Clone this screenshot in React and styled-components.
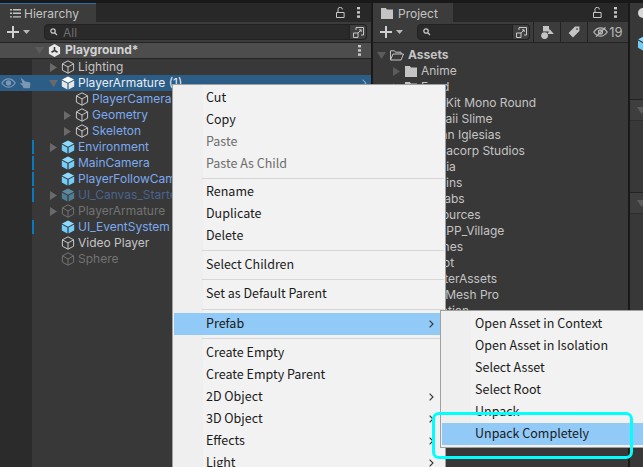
import React from 'react';
import styled, { createGlobalStyle } from 'styled-components';

const Global = createGlobalStyle`
  html, body {
    margin: 0;
    background: #191919;
  }
`;

const Screen = styled.div`
  position: relative;
  width: 643px;
  height: 467px;
  overflow: hidden;
  display: flex;
  gap: 2px;
  padding-top: 3px;
  box-sizing: border-box;
  background: #191919;
  font-family: Inter, 'Noto Sans', sans-serif;
  font-size: 12px;
  color: #c4c4c4;
`;

const Panel = styled.div`
  width: ${(p) => p.$w}px;
  flex: none;
  display: flex;
  flex-direction: column;
  background: #383838;
`;

const TabBar = styled.div`
  height: 19px;
  flex: none;
  display: flex;
  align-items: stretch;
  justify-content: space-between;
  background: #282828;
`;

const Tab = styled.div`
  display: flex;
  align-items: center;
  gap: ${(p) => p.$gap}px;
  width: ${(p) => p.$w}px;
  padding-left: ${(p) => p.$pad}px;
  box-sizing: border-box;
  background: #3c3c3c;
  border-top: ${(p) => (p.$active ? '1px solid #2c6da3' : '1px solid #3c3c3c')};
`;

const TabTools = styled.div`
  display: flex;
  align-items: center;
  gap: 12px;
  padding-right: 11px;
`;

const Toolbar = styled.div`
  height: 21px;
  flex: none;
  display: flex;
  align-items: center;
  box-sizing: border-box;
  padding-left: 7px;
  background: #3c3c3c;
  border-bottom: 1px solid #232323;
`;

const AddButton = styled.div`
  display: flex;
  align-items: center;
  gap: 4px;
  width: ${(p) => p.$w}px;
  flex: none;
`;

const SearchField = styled.div`
  flex: 1;
  height: 16px;
  display: flex;
  align-items: center;
  gap: 3px;
  box-sizing: border-box;
  padding-left: 5px;
  background: #2a2a2a;
  border: 1px solid #212121;
  border-radius: 4px 0 0 4px;
  color: #6f6f6f;
`;

const SearchEnd = styled.div`
  width: 17px;
  height: 16px;
  flex: none;
  display: flex;
  align-items: center;
  justify-content: center;
  box-sizing: border-box;
  background: #3f3f3f;
  border: 1px solid #212121;
  border-left: none;
  border-radius: 0 4px 4px 0;
  margin-right: ${(p) => p.$gap}px;
`;

const FilterButton = styled.div`
  width: ${(p) => p.$w}px;
  height: 20px;
  flex: none;
  display: flex;
  align-items: center;
  justify-content: center;
  gap: 1px;
  border-left: 1px solid #232323;
  color: #b8b8b8;
  font-size: 13px;
`;

const SceneHeader = styled.div`
  height: 16px;
  flex: none;
  display: flex;
  align-items: center;
  justify-content: space-between;
  box-sizing: border-box;
  padding: 0 10px 0 35px;
  background: #4d4d4d;
  border-bottom: 1px solid #242424;
  font-weight: 700;
  color: #d2d2d2;
`;

const SceneName = styled.div`
  display: flex;
  align-items: center;
  gap: 4px;
`;

const Name = styled.span`
  padding-bottom: 2px;
`;

const Tree = styled.div`
  flex: 1;
  background: linear-gradient(to right, #2b2b2b 32px, #383838 32px);
`;

const Row = styled.div`
  height: 16px;
  display: flex;
  align-items: center;
  background: ${(p) => (p.$selected ? '#2c5d87' : 'transparent')};
`;

const Gutter = styled.div`
  width: 32px;
  flex: none;
  display: flex;
  align-items: center;
  gap: 3px;
  padding-left: 1px;
  box-sizing: border-box;
`;

const Cell = styled.div`
  height: 14px;
  display: flex;
  align-items: center;
  box-sizing: border-box;
  border-left: 2px solid ${(p) => (p.$mark ? '#0a78bd' : 'transparent')};
  padding-left: ${(p) => 15 + p.$depth * 14}px;
  color: ${(p) => p.$color};
  white-space: nowrap;
`;

const ArrowSlot = styled.div`
  width: 12px;
  flex: none;
  display: flex;
  align-items: center;
`;

const Label = styled(Name)`
  margin-left: 3px;
`;

const RowEnd = styled.div`
  margin-left: auto;
  padding-right: 4px;
  display: flex;
`;

const AssetList = styled.div`
  flex: 1;
  padding-top: 4px;
`;

const AssetRow = styled.div`
  height: 16px;
  display: flex;
  align-items: center;
  gap: 4px;
  padding-left: ${(p) => 4 + p.$depth * 15}px;
  font-weight: ${(p) => (p.$root ? 700 : 400)};
  white-space: nowrap;
`;

const SidePanel = styled.div`
  flex: 1;
  display: flex;
  flex-direction: column;
  background: #383838;
`;

const SideTop = styled.div`
  height: 97px;
  flex: none;
  padding: 5px 0 0 7px;
  box-sizing: border-box;
  border-bottom: 1px solid #242424;
  display: flex;
  flex-direction: column;
  gap: 17px;
`;

const WhiteDot = styled.div`
  width: 10px;
  height: 10px;
  margin-left: 1px;
  border-radius: 50%;
  background: #d8d8d8;
`;

const SideHeader = styled.div`
  height: 20px;
  flex: none;
  display: flex;
  align-items: center;
  padding-left: 7px;
  background: #3e3e3e;
  border-bottom: 1px solid #2e2e2e;
`;

const SideBody = styled.div`
  height: 72px;
  flex: none;
  box-sizing: border-box;
  border-bottom: 1px solid #242424;
`;

const Menu = styled.div`
  position: absolute;
  left: ${(p) => p.$x}px;
  top: ${(p) => p.$y}px;
  width: ${(p) => p.$w}px;
  box-sizing: border-box;
  padding: 2px 1px;
  background: linear-gradient(to right, #efefef 30px, #f2f2f2 30px);
  border: 1px solid #a0a0a0;
  font-family: 'Noto Sans CJK SC', 'Noto Sans', sans-serif;
  font-size: 12.5px;
`;

const MenuRow = styled.div`
  height: 22px;
  display: flex;
  align-items: center;
  justify-content: space-between;
  padding: 0 10px 0 ${(p) => p.$pad}px;
  background: ${(p) => (p.$hot ? '#91c9f7' : 'transparent')};
  color: ${(p) => (p.$off ? '#6d6d6d' : '#1a1a1a')};
`;

const MenuText = styled.span`
  padding-bottom: 3px;
`;

const MenuSep = styled.div`
  height: 1px;
  margin: ${(p) => (p.$h > 7 ? 4 : 3)}px 0 ${(p) => p.$h - (p.$h > 7 ? 5 : 4)}px 28px;
  background: #d7d7d7;
`;

const Callout = styled.div`
  position: absolute;
  left: 432px;
  top: 412px;
  width: 201px;
  height: 47px;
  box-sizing: border-box;
  border: 3px solid #0ff;
  border-radius: 7px;
`;

const Arrow = ({ open, dim }) => (
  <svg width="9" height="9" viewBox="0 0 9 9">
    <path d={open ? 'M0 1h9L4.5 8z' : 'M1 0l7 4.5L1 9z'} fill={dim ? '#5c5c5c' : '#6a6a6a'} />
  </svg>
);

const Cube = ({ kind, size = 14 }) => {
  if (kind === 'wire' || kind === 'dim') {
    const c = kind === 'dim' ? '#737373' : '#c8c8c8';
    return (
      <svg width={size} height={size} viewBox="0 0 14 14" fill="none" stroke={c}>
        <path d="M7 .8l5.6 3v6.4L7 13.2 1.4 10.2V3.8z" />
        <path d="M1.4 3.8L7 7l5.6-3.2M7 7v6.2" />
      </svg>
    );
  }
  const top = { white: '#fff', blue: '#8ddcff', faded: '#5c8ba1' }[kind];
  const side = { white: '#e6e6e6', blue: '#72cdf9', faded: '#4f7d94' }[kind];
  return (
    <svg width={size} height={size} viewBox="0 0 14 14">
      <path d="M7 .4l6 3.2L7 6.8 1 3.6z" fill={top} />
      <path d="M.8 4.6l5.6 3v6L.8 10.6z" fill={side} />
      <path d="M13.2 4.6l-5.6 3v6l5.6-3z" fill={side} />
    </svg>
  );
};

const UnityMark = () => (
  <svg width="13" height="13" viewBox="0 0 13 13">
    <path d="M6.5 0l5.6 3.2v6.6L6.5 13 .9 9.8V3.2z" fill="#e8e8e8" />
    <path d="M6.5 6.5V3M6.5 6.5l3 1.8M6.5 6.5l-3 1.8" stroke="#3a3a3a" strokeWidth="1.6" />
  </svg>
);

const Dots = () => (
  <svg width="3" height="11" viewBox="0 0 3 11" fill="#c8c8c8">
    <rect y="0" width="3" height="2.4" />
    <rect y="4.2" width="3" height="2.4" />
    <rect y="8.4" width="3" height="2.4" />
  </svg>
);

const Lock = () => (
  <svg width="9" height="11" viewBox="0 0 9 11" fill="none" stroke="#c8c8c8">
    <path d="M.5 5.5h7.6v5H.5zM2 5.5V2.5a2.2 2.2 0 0 1 4.4 0" />
  </svg>
);

const Plus = () => (
  <svg width="12" height="12" viewBox="0 0 12 12" fill="#cfcfcf">
    <path d="M5 0h2v5h5v2H7v5H5V7H0V5h5z" />
  </svg>
);

const Caret = () => (
  <svg width="7" height="4" viewBox="0 0 7 4" fill="#b8b8b8">
    <path d="M0 0h7L3.5 4z" />
  </svg>
);

const Magnifier = () => (
  <svg width="10" height="8" viewBox="0 0 10 8" fill="none" stroke="#c4c4c4" strokeWidth="1.3">
    <circle cx="3" cy="3" r="2.2" />
    <path d="M4.6 4.6L7 7" />
  </svg>
);

const Expand = () => (
  <svg width="11" height="11" viewBox="0 0 11 11" fill="none" stroke="#c8c8c8">
    <path d="M3 3V.5h7.5V8H8" />
    <path d="M.5 6h4.5v4.5H.5zM5 6l3-3M6 2.8h2.2V5" />
  </svg>
);

const Folder = ({ open }) =>
  open ? (
    <svg width="14" height="11" viewBox="0 0 14 11" fill="none" stroke="#c4c4c4">
      <path d="M.5 10V.8h4l1 1.4h5.5V4M.5 10L3 4h10.5L11 10z" />
    </svg>
  ) : (
    <svg width="12" height="11" viewBox="0 0 12 11" fill="#c4c4c4">
      <path d="M0 11V0h4.8L6 1.6h6V11z" />
    </svg>
  );

const ListIcon = () => (
  <svg width="11" height="9" viewBox="0 0 11 9" fill="#c4c4c4">
    <path d="M0 0h2v1.4H0zM3 0h8v1.4H3zM0 3.6h2V5H0zM3 3.6h8V5H3zM0 7.2h2v1.4H0zM3 7.2h8v1.4H3z" />
  </svg>
);

const Eye = ({ off }) => (
  <svg width="15" height="10" viewBox="0 0 15 10" fill="none" stroke={off ? '#b8b8b8' : '#7b98b2'} strokeWidth="1.3">
    <path d="M.8 5C3 1.8 5 .8 7.5.8S12 1.8 14.2 5C12 8.2 10 9.2 7.5 9.2S3 8.2.8 5z" />
    <circle cx="7.5" cy="5" r="2" fill={off ? 'none' : '#7b98b2'} />
    {off && <path d="M3 9.6L12.5.4" />}
  </svg>
);

const Hand = () => (
  <svg width="12" height="12" viewBox="0 0 12 12" fill="#7b98b2">
    <path d="M1.6.6L5 3.2l1 1.2 4.6.8.8 1.4-.6 4.6H4.6L3.4 8.6 1 6.8l.8-.8 1.8.8L3 4.6z" />
  </svg>
);

const Shapes = () => (
  <svg width="13" height="13" viewBox="0 0 13 13" fill="#c4c4c4">
    <rect x="2" y="0" width="6" height="5.4" />
    <circle cx="3.6" cy="9.6" r="3.4" />
    <path d="M8.6 3l4.2 5H6.8z" />
  </svg>
);

const TagIcon = () => (
  <svg width="12" height="12" viewBox="0 0 12 12" fill="#c4c4c4">
    <path fillRule="evenodd" d="M7 .6h4.4V5L5 11.4.6 7zM9 2.2a.8.8 0 1 0 .01 0z" />
  </svg>
);

const Chevron = ({ color = '#333' }) => (
  <svg width="5" height="8" viewBox="0 0 5 8" fill="none" stroke={color} strokeWidth="1.1">
    <path d="M.6.6L4 4 .6 7.4" />
  </svg>
);

const hierarchy = [
  { name: 'Lighting', depth: 0, arrow: 'closed', icon: 'wire', color: '#c4c4c4' },
  { name: 'PlayerArmature (1)', depth: 0, arrow: 'open', icon: 'white', color: '#e8eef4', selected: true },
  { name: 'PlayerCameraRoot', depth: 1, icon: 'wire', color: '#7baaf0' },
  { name: 'Geometry', depth: 1, arrow: 'closed', icon: 'wire', color: '#7baaf0' },
  { name: 'Skeleton', depth: 1, arrow: 'closed', icon: 'wire', color: '#7baaf0' },
  { name: 'Environment', depth: 0, arrow: 'closed', icon: 'blue', color: '#7baaf0', mark: true },
  { name: 'MainCamera', depth: 0, icon: 'blue', color: '#7baaf0', mark: true },
  { name: 'PlayerFollowCamera', depth: 0, icon: 'blue', color: '#7baaf0', mark: true },
  { name: 'UI_Canvas_StarterAssets', depth: 0, arrow: 'closed', icon: 'faded', color: '#48648f', mark: true },
  { name: 'PlayerArmature', depth: 0, arrow: 'closed', icon: 'dim', color: '#727272' },
  { name: 'UI_EventSystem', depth: 0, icon: 'blue', color: '#7baaf0', mark: true },
  { name: 'Video Player', depth: 0, icon: 'wire', color: '#c4c4c4' },
  { name: 'Sphere', depth: 0, icon: 'dim', color: '#727272' },
];

const assets = [
  'Anime', 'Food', 'Fire Kit Mono Round', 'Kawaii Slime', 'Julian Iglesias', 'Megacorp Studios', 'Media',
  'Plugins', 'Prefabs', 'Resources', 'HDRPP_Village', 'Scenes', 'Robot', 'StarterAssets', 'TextMesh Pro', 'UMotion',
];

const mainMenu = [
  ['Cut'], ['Copy'], ['Paste', 'off'], ['Paste As Child', 'off'], 6,
  ['Rename'], ['Duplicate'], ['Delete'], 7,
  ['Select Children'], 7,
  ['Set as Default Parent'], 8,
  ['Prefab', 'hot', 'sub'], 7,
  ['Create Empty'], ['Create Empty Parent'], ['2D Object', '', 'sub'], ['3D Object', '', 'sub'],
  ['Effects', '', 'sub'], ['Light', '', 'sub'],
];

const subMenu = ['Open Asset in Context', 'Open Asset in Isolation', 'Select Asset', 'Select Root', 'Unpack'];

export default function App() {
  return (
    <>
      <Global />
      <Screen>
        <Panel $w={371}>
          <TabBar>
            <Tab $active $w={96} $pad={10} $gap={3}>
              <ListIcon />
              Hierarchy
            </Tab>
            <TabTools>
              <Lock />
              <Dots />
            </TabTools>
          </TabBar>
          <Toolbar>
            <AddButton $w={37}>
              <Plus />
              <Caret />
            </AddButton>
            <SearchField>
              <Magnifier />
              All
            </SearchField>
            <SearchEnd $gap={4}>
              <Expand />
            </SearchEnd>
          </Toolbar>
          <SceneHeader>
            <SceneName>
              <Arrow open dim />
              <UnityMark />
              <Name>Playground*</Name>
            </SceneName>
            <Dots />
          </SceneHeader>
          <Tree>
            {hierarchy.map((item, i) => (
              <Row key={i} $selected={item.selected}>
                <Gutter>
                  {item.selected && <Eye />}
                  {item.selected && <Hand />}
                </Gutter>
                <Cell $depth={item.depth} $mark={item.mark} $color={item.color}>
                  <ArrowSlot>{item.arrow && <Arrow open={item.arrow === 'open'} />}</ArrowSlot>
                  <Cube kind={item.icon} />
                  <Label>{item.name}</Label>
                </Cell>
                {item.selected && (
                  <RowEnd>
                    <Chevron color="#7aa6cc" />
                  </RowEnd>
                )}
              </Row>
            ))}
          </Tree>
        </Panel>

        <Panel $w={255}>
          <TabBar>
            <Tab $w={80} $pad={8} $gap={5}>
              <Folder />
              Project
            </Tab>
            <TabTools>
              <Lock />
              <Dots />
            </TabTools>
          </TabBar>
          <Toolbar>
            <AddButton $w={37}>
              <Plus />
              <Caret />
            </AddButton>
            <SearchField>
              <Magnifier />
            </SearchField>
            <SearchEnd $gap={3}>
              <Expand />
            </SearchEnd>
            <FilterButton $w={26}>
              <Shapes />
            </FilterButton>
            <FilterButton $w={26}>
              <TagIcon />
            </FilterButton>
            <FilterButton $w={40}>
              <Eye off />
              19
            </FilterButton>
          </Toolbar>
          <AssetList>
            <AssetRow $depth={0} $root>
              <Arrow open dim />
              <Folder open />
              <Name>Assets</Name>
            </AssetRow>
            {assets.map((name) => (
              <AssetRow key={name} $depth={1}>
                <Arrow dim />
                <Folder />
                <Name>{name}</Name>
              </AssetRow>
            ))}
          </AssetList>
        </Panel>

        <SidePanel>
          <SideTop>
            <WhiteDot />
            <Cube kind="blue" size={17} />
          </SideTop>
          <SideHeader>
            <Arrow open dim />
          </SideHeader>
          <SideBody />
          <SideHeader>
            <Arrow open dim />
          </SideHeader>
        </SidePanel>

        <Menu $x={172} $y={84} $w={274}>
          {mainMenu.map((item, i) =>
            typeof item === 'number' ? (
              <MenuSep key={i} $h={item} />
            ) : (
              <MenuRow key={i} $pad={32} $hot={item[1] === 'hot'} $off={item[1] === 'off'}>
                <MenuText>{item[0]}</MenuText>
                {item[2] && <Chevron />}
              </MenuRow>
            ),
          )}
        </Menu>

        <Menu $x={440} $y={310} $w={220}>
          {subMenu.map((name) => (
            <MenuRow key={name} $pad={33}>
              <MenuText>{name}</MenuText>
            </MenuRow>
          ))}
          <MenuRow $pad={33} $hot>
            <MenuText>Unpack Completely</MenuText>
          </MenuRow>
        </Menu>

        <Callout />
      </Screen>
    </>
  );
}
